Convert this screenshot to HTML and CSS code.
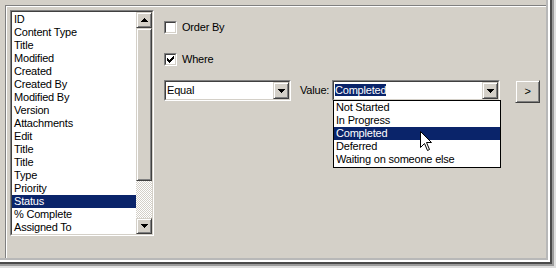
FILE: index.html
```html
<!DOCTYPE html>
<html>
<head>
<meta charset="utf-8">
<link rel="stylesheet" href="styles.css">
</head>
<body>
<div class="frame">
  <div class="dialog">
    <div class="group">
      <div class="listbox sunken">
        <div class="in lb-in">
          <div class="items">
            <div class="item">ID</div>
            <div class="item">Content Type</div>
            <div class="item">Title</div>
            <div class="item">Modified</div>
            <div class="item">Created</div>
            <div class="item">Created By</div>
            <div class="item">Modified By</div>
            <div class="item">Version</div>
            <div class="item">Attachments</div>
            <div class="item">Edit</div>
            <div class="item">Title</div>
            <div class="item">Title</div>
            <div class="item">Type</div>
            <div class="item">Priority</div>
            <div class="item sel">Status</div>
            <div class="item">% Complete</div>
            <div class="item">Assigned To</div>
          </div>
          <div class="vscroll">
            <div class="raised sbtn"><svg width="7" height="4" viewBox="0 0 7 4"><path d="M3 0h1v1H3zM2 1h3v1H2zM1 2h5v1H1zM0 3h7v1H0z" fill="#000"/></svg></div>
            <div class="raised thumb"></div>
            <div class="track"></div>
            <div class="raised sbtn"><svg width="7" height="4" viewBox="0 0 7 4"><path d="M0 0h7v1H0zM1 1h5v1H1zM2 2h3v1H2zM3 3h1v1H3z" fill="#000"/></svg></div>
          </div>
        </div>
      </div>
      <div class="panel">
        <div class="chkrow">
          <div class="chk sunken"><div class="in chk-in"></div></div>
          <span>Order By</span>
        </div>
        <div class="chkrow row2">
          <div class="chk sunken"><div class="in chk-in"><svg width="7" height="7" viewBox="0 0 7 7"><path d="M6 0h1v1H6zM5 1h2v1H5zM0 2h1v1H0zM4 2h3v1H4zM0 3h2v1H0zM3 3h3v1H3zM0 4h5v1H0zM1 5h3v1H1zM2 6h1v1H2z" fill="#000"/></svg></div></div>
          <span>Where</span>
        </div>
        <div class="comborow">
          <div class="combo sunken combo-op">
            <div class="in combo-in">
              <span class="ctext">Equal</span>
              <div class="raised dbtn"><svg width="7" height="4" viewBox="0 0 7 4"><path d="M0 0h7v1H0zM1 1h5v1H1zM2 2h3v1H2zM3 3h1v1H3z" fill="#000"/></svg></div>
            </div>
          </div>
          <span class="vlabel">Value:</span>
          <div class="combo sunken combo-val">
            <div class="in combo-in">
              <span class="ctext hl">Completed</span>
              <div class="raised dbtn"><svg width="7" height="4" viewBox="0 0 7 4"><path d="M0 0h7v1H0zM1 1h5v1H1zM2 2h3v1H2zM3 3h1v1H3z" fill="#000"/></svg></div>
            </div>
            <div class="droplist">
              <div class="ditem">Not Started</div>
              <div class="ditem">In Progress</div>
              <div class="ditem sel">Completed</div>
              <div class="ditem">Deferred</div>
              <div class="ditem">Waiting on someone else</div>
            </div>
            <svg class="cursor" width="13" height="21" viewBox="0 0 13 21"><path d="M0.5 0.5 L0.5 16.5 L4.5 12.5 L7.5 19.5 L9.5 18.5 L6.5 11.5 L11.5 11.5 Z" fill="#fff" stroke="#000" stroke-width="1" stroke-linejoin="miter"/></svg>
          </div>
          <div class="raised gobtn">&gt;</div>
        </div>
      </div>
    </div>
  </div>
</div>
</body>
</html>
```
FILE: styles.css
```css
html, body {
  margin: 0;
  padding: 0;
  background: #ffffff;
}
body {
  width: 556px;
  height: 269px;
  overflow: hidden;
  font-family: "Liberation Sans", Arial, sans-serif;
  font-size: 11px;
  letter-spacing: -0.2px;
  color: #000;
}
.frame {
  width: 546px;
  height: 258px;
  box-shadow:
    1px 1px 0 1px #b8b8b8,
    2px 2px 0 2px #ffffff,
    3px 3px 0 3px #4a4a4a,
    4px 4px 0 4px #9c9c9c,
    5px 5px 0 5px #dedede;
}
.dialog {
  width: 546px;
  height: 258px;
  box-sizing: border-box;
  background: #d4d0c8;
  overflow: hidden;
  padding: 5px 0 0 5px;
}
.group {
  height: 320px;
  border-top: 1px solid #808080;
  border-left: 1px solid #808080;
  box-shadow: inset 1px 1px 0 #ffffff;
  padding: 4px 0 0 4px;
  display: flex;
  align-items: flex-start;
  gap: 10px;
}
.sunken {
  border: 1px solid;
  border-color: #808080 #ffffff #ffffff #808080;
  box-sizing: border-box;
}
.sunken > .in {
  border: 1px solid;
  border-color: #404040 #d4d0c8 #d4d0c8 #404040;
  box-sizing: border-box;
  height: 100%;
}
.raised {
  background: #d4d0c8;
  border: 1px solid;
  border-color: #d4d0c8 #404040 #404040 #d4d0c8;
  box-shadow: inset 1px 1px 0 #ffffff, inset -1px -1px 0 #808080;
  box-sizing: border-box;
  display: flex;
  align-items: center;
  justify-content: center;
}
.raised svg { display: block; }

/* list box */
.listbox {
  width: 144px;
  height: 226px;
}
.lb-in {
  display: flex;
  background: #ffffff;
}
.items {
  flex: 1;
  overflow: hidden;
  padding-top: 1px;
  white-space: nowrap;
}
.item {
  height: 13px;
  line-height: 13px;
  padding-left: 2px;
}
.sel {
  background: #0a246a;
  color: #ffffff;
}
.vscroll {
  width: 16px;
  display: flex;
  flex-direction: column;
}
.sbtn {
  height: 16px;
  flex: none;
}
.thumb {
  height: 153px;
  flex: none;
}
.track {
  flex: 1;
  background: repeating-conic-gradient(#d4d0c8 0 25%, #ffffff 0 50%);
  background-size: 2px 2px;
}

/* right panel */
.panel {
  display: flex;
  flex-direction: column;
  padding-top: 11px;
}
.chkrow {
  display: flex;
  align-items: center;
  gap: 5px;
  height: 13px;
  line-height: 13px;
}
.row2 { margin-top: 19px; }
.chk {
  width: 13px;
  height: 13px;
}
.chk-in {
  background: #ffffff;
  display: flex;
  align-items: center;
  justify-content: center;
}
.chk-in svg { display: block; }
.comborow {
  margin-top: 14px;
  display: flex;
  align-items: flex-start;
}
.combo {
  height: 21px;
  position: relative;
}
.combo-op { width: 127px; }
.combo-val { width: 168px; }
.combo-in {
  background: #ffffff;
  display: flex;
  align-items: flex-start;
}
.ctext {
  flex: none;
  height: 17px;
  line-height: 17px;
  padding-left: 1px;
}
.ctext.hl {
  margin: 2px 0 0 1px;
  padding: 0;
  height: 12px;
  line-height: 12px;
  background: #0a246a;
  color: #ffffff;
}
.dbtn {
  margin-left: auto;
  width: 16px;
  height: 17px;
}
.vlabel {
  margin-left: 9px;
  width: 32px;
  line-height: 21px;
}
.droplist {
  position: absolute;
  left: 0;
  top: 19px;
  width: 168px;
  box-sizing: border-box;
  border: 1px solid #000000;
  background: #ffffff;
  padding-bottom: 1px;
  white-space: nowrap;
}
.ditem {
  height: 13px;
  line-height: 13px;
  padding-left: 2px;
}
.cursor {
  position: absolute;
  left: 87px;
  top: 50px;
}
.gobtn {
  margin-left: 15px;
  width: 25px;
  height: 23px;
  line-height: 21px;
}
```
